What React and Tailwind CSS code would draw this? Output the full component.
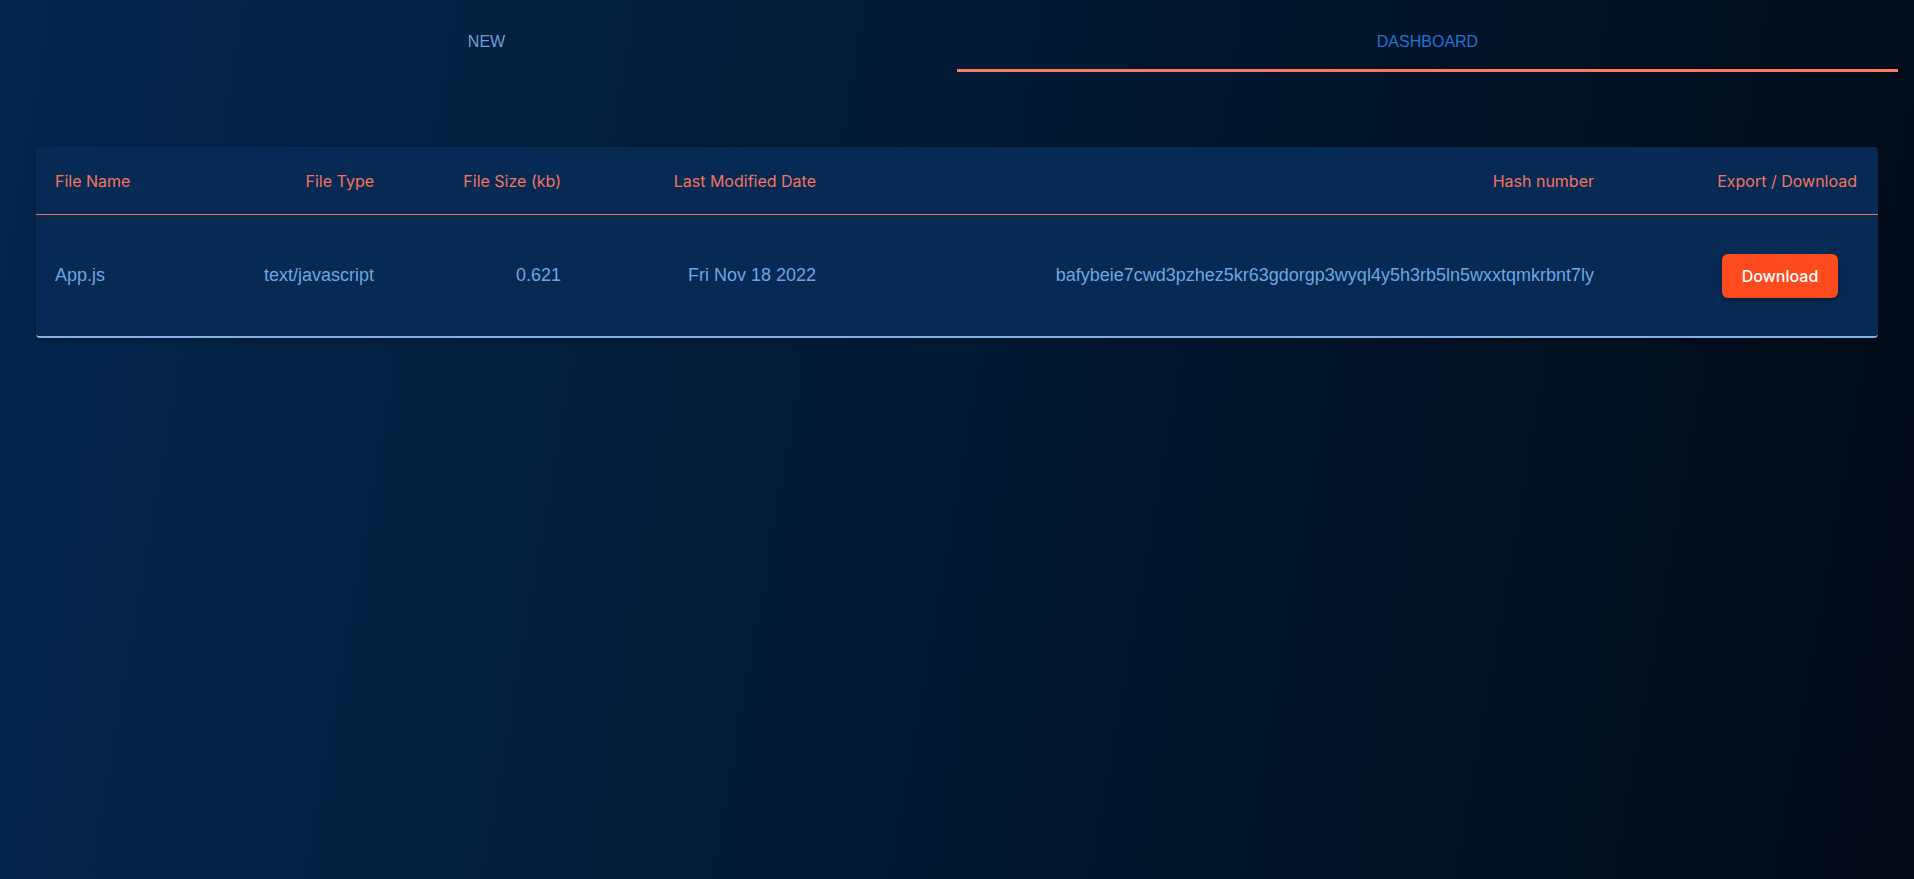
import React, { useState } from 'react';

const files = [
  {
    name: 'App.js',
    type: 'text/javascript',
    size: '0.621',
    modified: 'Fri Nov 18 2022',
    hash: 'bafybeie7cwd3pzhez5kr63gdorgp3wyql4y5h3rb5ln5wxxtqmkrbnt7ly'
  }
];

const headers = ['File Name', 'File Type', 'File Size (kb)', 'Last Modified Date', 'Hash number', 'Export / Download'];

const App = () => {
  const [tab, setTab] = useState('dashboard');

  return (
    <div className="min-h-screen w-full bg-[linear-gradient(100deg,#03264c_0%,#021a36_45%,#020a15_100%)] font-['Liberation_Sans',Arial,sans-serif]">
      {/* Tabs */}
      <div className="flex px-4 pt-[14px]">
        {[
          { key: 'new', label: 'NEW' },
          { key: 'dashboard', label: 'DASHBOARD' }
        ].map((t) => (
          <button
            key={t.key}
            onClick={() => setTab(t.key)}
            className={`relative flex h-[58px] flex-1 items-center justify-center pb-[3px] text-[16px] uppercase ${
              tab === t.key ? 'text-[#1f74db]' : 'text-[#6e9fd6]'
            }`}
          >
            {t.label}
            {tab === t.key && <span className="absolute bottom-0 left-0 h-[3px] w-full bg-[#fa7a63]" />}
          </button>
        ))}
      </div>

      {/* Files table */}
      <div className="mx-[36px] mt-[75px] overflow-hidden rounded-[4px] border-b-2 border-[#80b2e8] bg-[#062a54] shadow-[0_2px_4px_rgba(0,0,0,0.3)]">
        <div className="grid h-[68px] grid-cols-[200px_154px_187px_255px_778px_1fr] items-center border-b border-[#e8765f] font-['Inter',sans-serif] text-[16px] text-[#f4735f]">
          {headers.map((h, i) => (
            <div key={h} className={i === 0 ? 'pl-[19px]' : i === 5 ? 'pr-[21px] text-right' : 'pr-4 text-right'}>
              {h}
            </div>
          ))}
        </div>

        {files.map((f) => (
          <div
            key={f.hash}
            className="grid h-[121px] grid-cols-[200px_154px_187px_255px_778px_1fr] items-center text-[18px] text-[#6fa6e2]"
          >
            <div className="pl-[19px]">{f.name}</div>
            <div className="pr-4 text-right">{f.type}</div>
            <div className="pr-4 text-right">{f.size}</div>
            <div className="pr-4 text-right">{f.modified}</div>
            <div className="pr-4 text-right">{f.hash}</div>
            <div className="flex justify-end pr-[40px]">
              <button className="h-[44px] w-[116px] rounded-[6px] bg-[#ff4a1f] font-['Inter',sans-serif] text-[16px] font-medium text-white shadow-[0_2px_4px_rgba(0,0,0,0.35)]">
                Download
              </button>
            </div>
          </div>
        ))}
      </div>
    </div>
  );
};

export default App;
